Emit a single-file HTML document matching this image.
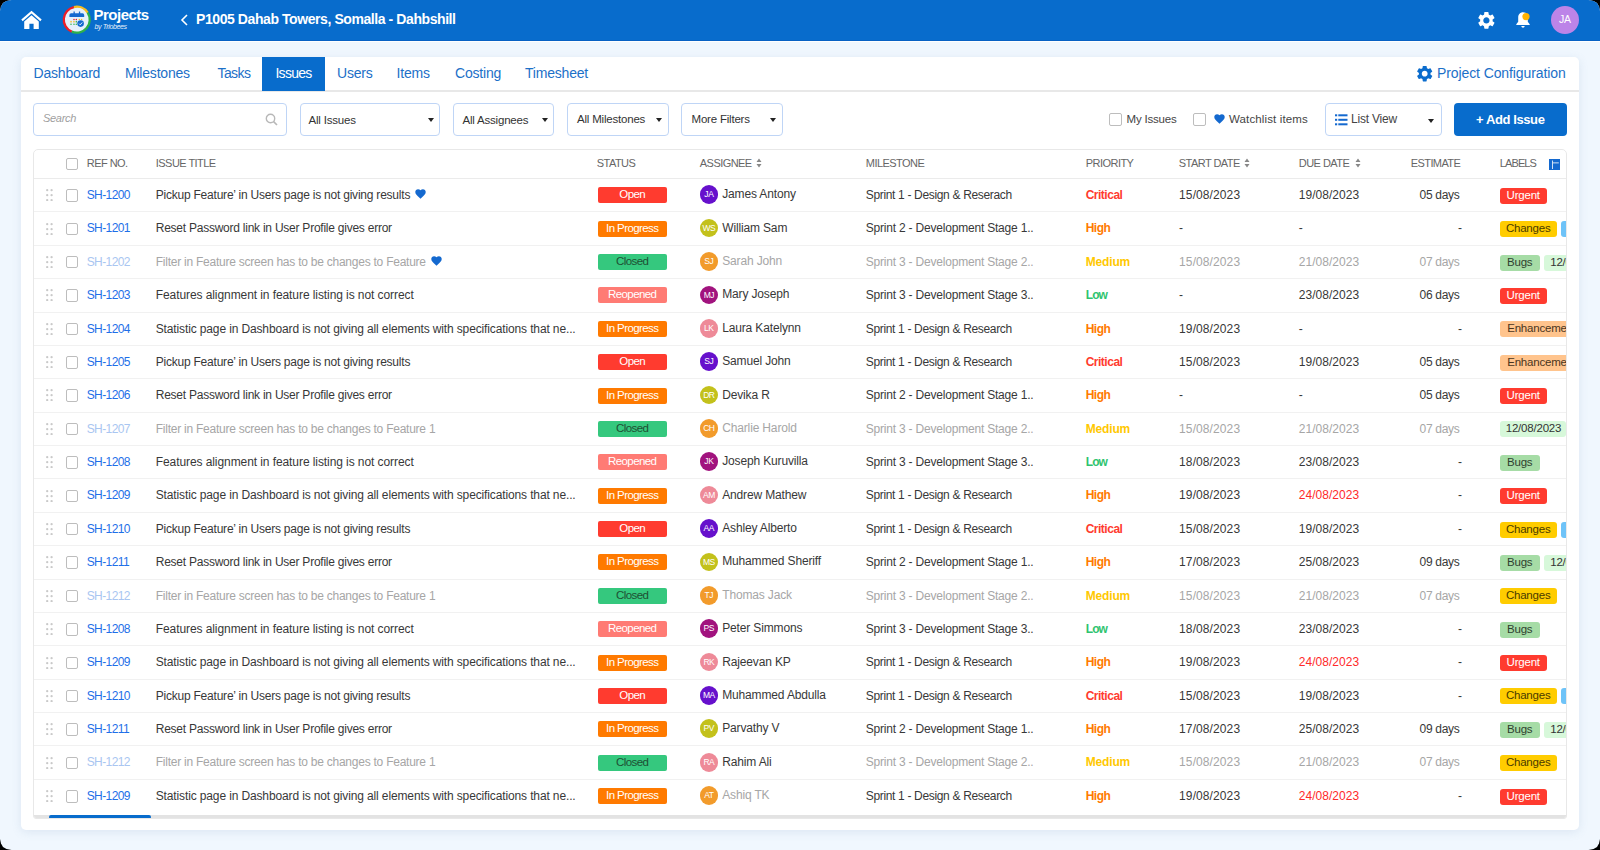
<!DOCTYPE html>
<html><head><meta charset="utf-8"><title>Issues</title>
<style>
*{margin:0;padding:0;box-sizing:border-box}
html,body{width:1600px;height:850px;overflow:hidden;background:#000}
body{font-family:"Liberation Sans",sans-serif;position:relative}
.frame{position:absolute;left:0;top:0;width:1600px;height:850px;overflow:hidden;background:#F0F7FE;clip-path:polygon(0px 11px,1px 6.5px,3px 3px,6.5px 1px,11.5px 0px,1588.5px 0px,1593.5px 1px,1597px 3px,1599px 6.5px,1600px 11px,1600px 839px,1599px 843.5px,1597px 847px,1593.5px 849px,1588.5px 850px,11.5px 850px,6.5px 849px,3px 847px,1px 843.5px,0px 839px)}
.topbar{position:absolute;left:0;top:0;width:1600px;height:40.6px;background:#086CCC;border-bottom:1.6px solid #0862C4}
.topline{position:absolute;left:0;top:40.6px;width:1600px;height:1.6px;background:#fff}
.abs{position:absolute}
.home{left:21px;top:10px}
.logo{left:62px;top:5px}
.brand{left:93.5px;top:5.6px;color:#fff;font-weight:bold;font-size:15px;letter-spacing:-0.5px;line-height:18px}
.brand-sub{left:94.5px;top:22.5px;color:#fff;font-style:italic;font-size:7px;line-height:8px;letter-spacing:-0.35px;opacity:.9}
.back{left:180px;top:14px}
.ptitle{left:196px;top:11px;color:#fff;font-weight:bold;font-size:14px;line-height:17px;letter-spacing:-0.42px}
.tgear{left:1475.8px;top:9.8px}
.bell{left:1515px;top:11px}
.uav{left:1551px;top:6px;width:28px;height:28px;border-radius:50%;background:#BC84E8;color:#fff;font-size:10.5px;text-align:center;line-height:27px;letter-spacing:-0.2px}

.card{position:absolute;left:20.8px;top:57.2px;width:1558.4px;height:772.5px;background:#fff;border-radius:5px;box-shadow:0 2px 10px rgba(110,140,180,.16)}
.tabline{position:absolute;left:21px;top:90px;width:1558px;height:1.5px;background:#E8E8E8}
.tab{position:absolute;top:57px;height:33.5px;line-height:33px;font-size:14px;color:#1C70C8;letter-spacing:-0.2px}
.tab.act{background:#086CCC;color:#fff;left:262.3px;width:62.5px;text-align:center}
.pconf{left:1437px;top:64px;font-size:14px;line-height:18px;color:#1C70C8;letter-spacing:-0.1px}
.pgear{left:1415.4px;top:63.5px}

.inp{position:absolute;top:103px;height:33px;border:1px solid #BFD5F6;border-radius:4px;background:#fff}
.ph{left:43px;top:111px;font-size:11px;font-style:italic;color:#A0A0A0;line-height:14px;letter-spacing:-0.3px}
.sicon{left:264.8px;top:113.2px}
.sel{position:absolute;font-size:11.5px;color:#333;line-height:14px;letter-spacing:-0.2px}
.caret{position:absolute;width:0;height:0;border-left:3.5px solid transparent;border-right:3.5px solid transparent;border-top:4px solid #222}
.cbx{position:absolute;width:12.5px;height:12.5px;border:1.3px solid #BDBDBD;border-radius:2px;background:#fff}
.lbl{position:absolute;font-size:11.5px;color:#444;line-height:14px;letter-spacing:-0.2px}
.addbtn{position:absolute;left:1454px;top:103px;width:112.5px;height:33px;border-radius:4px;background:#086CCC;color:#fff;font-weight:bold;font-size:13px;line-height:33px;text-align:center;letter-spacing:-0.4px}

.tbl{position:absolute;left:33px;top:149px;width:1534px;height:670px;border:1px solid #E8E8E8;border-radius:5px 5px 3px 3px;overflow:hidden;background:#fff}
.thead{position:absolute;left:-1.2px;top:0;width:calc(100% + 2px);height:29px;border-bottom:1.5px solid #EBEBEB}
.th{position:absolute;top:-0.7px;line-height:28px;font-size:11px;color:#666;letter-spacing:-0.55px}
.sort{display:inline-block;vertical-align:middle;margin-left:6px;margin-top:-2px}
.row{position:absolute;left:-1.3px;width:calc(100% + 2px);height:33.333px;border-bottom:1px solid #F1F1F1}
.drag{position:absolute;left:13.4px;top:10.2px;width:8px;height:12px}
.drag i{position:absolute;width:2.2px;height:2.2px;border-radius:50%;background:#C8C8C8}
.drag i:nth-child(1){left:0;top:0}.drag i:nth-child(2){left:4.4px;top:0}
.drag i:nth-child(3){left:0;top:5px}.drag i:nth-child(4){left:4.4px;top:5px}
.drag i:nth-child(5){left:0;top:10px}.drag i:nth-child(6){left:4.4px;top:10px}
.rcb{left:33px;top:10.2px}
.cb{position:absolute;width:12.5px;height:12.5px;border:1.3px solid #BDBDBD;border-radius:2px}
.c{position:absolute;top:0;line-height:33px;font-size:12px;color:#383838;white-space:nowrap}
.ref{left:54px;color:#1E6FE8;letter-spacing:-0.6px}
.ref.refg{color:#A9C6F1}
.title{left:123px;letter-spacing:-0.24px}
.title svg{vertical-align:middle;margin-top:-3px;margin-left:2px}
.tg{color:#A6A6A6}
.tr{color:#FF2A2A}
.badge{position:absolute;left:564.8px;top:8.3px;width:69.4px;height:16px;border-radius:2px;font-size:11.5px;line-height:15.4px;text-align:center;letter-spacing:-0.6px}
.av{position:absolute;left:666.8px;top:6.4px;width:18.7px;height:18.7px;border-radius:50%;color:#fff;font-size:8.5px;line-height:18.7px;text-align:center;letter-spacing:-0.45px}
.name{left:689.5px;top:-0.7px;letter-spacing:-0.15px}
.ms{left:833px;letter-spacing:-0.33px}
.prio{left:1053px;font-weight:bold;letter-spacing:-0.5px}
.sd{left:1146.4px;letter-spacing:0.1px}
.dd{left:1266px;letter-spacing:0.05px}
.est{right:107.2px;text-align:right;letter-spacing:-0.3px}
.labels{position:absolute;left:1467px;top:8.8px;white-space:nowrap;font-size:0}
.chip{display:inline-block;height:16px;line-height:15px;border-radius:3px;padding:0;text-align:center;font-size:11.5px;margin-right:4.5px;vertical-align:top;letter-spacing:-0.2px}
.ch-urg{background:#FF3B2F;color:#fff;width:47px}
.ch-chg{background:#FFCC00;color:#4A3B00;width:57px}
.ch-blue{background:#6EC3F8;width:20px}
.ch-bug{background:#A6DCA6;color:#2F3F2F;width:40px}
.ch-date{background:#D7F8DA;color:#333;width:66px;text-align:left;padding-left:6px}
.ch-enh{background:#FFC48D;color:#4A3520;width:80px;text-align:left;padding-left:7.5px}
.scroll{position:absolute;left:0;top:665px;width:100%;height:4px;background:#E3E3E3}
.thumb{position:absolute;left:14.9px;top:665px;width:102px;height:3.7px;border-radius:2px;background:#086CCC}

.row:last-of-type{border-bottom:none}
.lastrow{border-bottom:none}

</style></head><body>
<div class="frame">
<div class="topbar"></div>
<div class="topline"></div>
<svg class="abs home" width="21" height="20" viewBox="0 0 21 20"><path d="M10.5 0.8 0.3 9.6l1.4 1.6L10.5 3.6l8.8 7.6 1.4-1.6z" fill="#fff"/><path d="M10.5 5.2 3.2 11.4V19h5.2v-5.3h4.2V19h5.2v-7.6z" fill="#fff"/></svg>
<svg class="abs logo" width="30" height="30" viewBox="0 0 30 30">
<circle cx="14.75" cy="14.7" r="12.8" fill="#E6F0FB"/>
<path d="M11.83 2.03 A13.0 13.0 0 0 1 25.65 7.62" stroke="#F5BD1F" stroke-width="2.3" fill="none"/>
<path d="M25.65 7.62 A13.0 13.0 0 0 1 9.67 26.67" stroke="#2EB14B" stroke-width="2.3" fill="none"/>
<path d="M9.67 26.67 A13.0 13.0 0 0 1 11.83 2.03" stroke="#EE1D26" stroke-width="2.3" fill="none"/>
<path d="M7.4 12V10q0-1.8 1.8-1.8h11.2q1.8 0 1.8 1.8v2z" fill="#1469CF"/>
<rect x="11.5" y="6.5" width="1.3" height="2.5" fill="#1469CF"/><rect x="16.9" y="6.5" width="1.3" height="2.5" fill="#1469CF"/>
<g>
<circle cx="12" cy="14.4" r="0.75" fill="#E51C23"/><circle cx="14.3" cy="14.4" r="0.75" fill="#E51C23"/><circle cx="17.3" cy="14.4" r="0.7" fill="#F5BD1F"/><circle cx="19.6" cy="14.4" r="0.7" fill="#F5BD1F"/>
<rect x="8.4" y="15.9" width="1.3" height="1.6" fill="#F5BD1F"/><rect x="11.3" y="15.9" width="1.3" height="1.6" fill="#F5BD1F"/><rect x="13.7" y="15.9" width="1.2" height="1.6" fill="#2EB14B"/>
<circle cx="9" cy="19.3" r="0.75" fill="#2EB14B"/><circle cx="12" cy="19.3" r="0.75" fill="#2EB14B"/><circle cx="14.3" cy="19.3" r="0.75" fill="#2EB14B"/>
</g>
<circle cx="18.6" cy="18.6" r="3.3" fill="#1469CF"/><path d="M17.1 18.7l1.1 1.1 2-2.3" stroke="#fff" stroke-width="0.9" fill="none"/>
</svg>
<div class="abs brand">Projects</div>
<div class="abs brand-sub">by Triobees</div>
<svg class="abs back" width="9" height="12" viewBox="0 0 9 12"><path d="M7 1 2 6l5 5" stroke="#fff" stroke-width="1.6" fill="none"/></svg>
<div class="abs ptitle">P1005 Dahab Towers, Somalla - Dahbshill</div>
<svg class="abs tgear" width="20.8" height="20.8" viewBox="0 0 24 24"><path fill="#fff" d="M19.14 12.94c.04-.3.06-.61.06-.94 0-.32-.02-.64-.07-.94l2.03-1.58a.49.49 0 0 0 .12-.61l-1.92-3.32a.49.49 0 0 0-.59-.22l-2.39.96c-.5-.38-1.03-.7-1.62-.94l-.36-2.54a.48.48 0 0 0-.48-.41h-3.84c-.24 0-.43.17-.47.41l-.36 2.54c-.59.24-1.13.57-1.62.94l-2.39-.96a.48.48 0 0 0-.59.22L2.74 8.87c-.12.21-.08.47.12.61l2.03 1.58c-.05.3-.09.63-.09.94s.02.64.07.94l-2.03 1.58a.49.49 0 0 0-.12.61l1.92 3.32c.12.22.37.29.59.22l2.39-.96c.5.38 1.03.7 1.62.94l.36 2.54c.05.24.24.41.48.41h3.84c.24 0 .44-.17.47-.41l.36-2.54c.59-.24 1.13-.56 1.62-.94l2.39.96c.22.08.47 0 .59-.22l1.92-3.32c.12-.22.07-.47-.12-.61l-2.01-1.58zM12 15.6c-1.98 0-3.6-1.62-3.6-3.6s1.62-3.6 3.6-3.6 3.6 1.62 3.6 3.6-1.62 3.6-3.6 3.6z"/></svg>
<svg class="abs bell" width="16" height="18" viewBox="0 0 16 18"><path d="M8 1.2c-2.8 0-4.8 2.2-4.8 5v4.6L1.3 13.3v.8h13.4v-.8l-1.9-2.5V6.2c0-2.8-2-5-4.8-5z" fill="#fff"/><path d="M6.4 15.1h3.2c0 .9-.7 1.6-1.6 1.6s-1.6-.7-1.6-1.6z" fill="#fff"/><circle cx="11" cy="5.6" r="3.6" fill="#FFB300"/></svg>
<div class="abs uav">JA</div>

<div class="card"></div>
<div class="tabline"></div>
<div class="tab" style="left:33.5px">Dashboard</div>
<div class="tab" style="left:125px">Milestones</div>
<div class="tab" style="left:217.5px;letter-spacing:-0.6px">Tasks</div>
<div class="tab act" style="letter-spacing:-0.7px">Issues</div>
<div class="tab" style="left:337px">Users</div>
<div class="tab" style="left:396.5px">Items</div>
<div class="tab" style="left:455px">Costing</div>
<div class="tab" style="left:525px">Timesheet</div>
<svg class="abs pgear" width="19.4" height="19.4" viewBox="0 0 24 24"><path fill="#0B6CCD" d="M19.14 12.94c.04-.3.06-.61.06-.94 0-.32-.02-.64-.07-.94l2.03-1.58a.49.49 0 0 0 .12-.61l-1.92-3.32a.49.49 0 0 0-.59-.22l-2.39.96c-.5-.38-1.030-.7-1.62-.94l-.36-2.54a.48.48 0 0 0-.48-.41h-3.84c-.24 0-.43.17-.47.41l-.36 2.54c-.59.24-1.13.57-1.62.94l-2.39-.96a.48.48 0 0 0-.59.22L2.74 8.87c-.12.21-.08.47.12.61l2.03 1.58c-.05.3-.09.63-.09.94s.02.64.07.94l-2.03 1.58a.49.49 0 0 0-.12.61l1.92 3.32c.12.22.37.29.59.22l2.39-.96c.5.38 1.03.7 1.62.94l.36 2.54c.05.24.24.41.48.41h3.84c.24 0 .44-.17.47-.41l.36-2.54c.59-.24 1.13-.56 1.62-.94l2.39.96c.22.08.47 0 .59-.22l1.92-3.32c.12-.22.07-.47-.12-.61l-2.01-1.58zM12 15.6c-1.98 0-3.6-1.620-3.6-3.6s1.62-3.6 3.6-3.6 3.6 1.62 3.6 3.6-1.62 3.6-3.6 3.6z"/></svg>
<div class="abs pconf">Project Configuration</div>

<div class="inp" style="left:33px;width:254px"></div>
<div class="abs ph">Search</div>
<svg class="abs sicon" width="14" height="13" viewBox="0 0 14 13"><circle cx="5.5" cy="5.5" r="4.2" stroke="#B8B8B8" stroke-width="1.4" fill="none"/><path d="M8.6 8.6l3.4 3.4" stroke="#B8B8B8" stroke-width="1.6"/></svg>
<div class="inp" style="left:300px;width:140px"></div>
<div class="sel" style="left:308.5px;top:113px">All Issues</div>
<div class="caret" style="left:427.5px;top:117.8px"></div>
<div class="inp" style="left:453px;width:101px"></div>
<div class="sel" style="left:462.5px;top:113px">All Assignees</div>
<div class="caret" style="left:541.5px;top:117.5px"></div>
<div class="inp" style="left:567px;width:102px"></div>
<div class="sel" style="left:577px;top:112px">All Milestones</div>
<div class="caret" style="left:655.8px;top:117.5px"></div>
<div class="inp" style="left:681px;width:102px"></div>
<div class="sel" style="left:691.5px;top:112px">More Filters</div>
<div class="caret" style="left:770px;top:117.5px"></div>

<div class="cbx" style="left:1109px;top:113px"></div>
<div class="lbl" style="left:1126.5px;top:112px">My Issues</div>
<div class="cbx" style="left:1193px;top:113px"></div>
<svg class="abs" style="left:1214px;top:114px" width="11" height="10" viewBox="0 0 24 22"><path d="M12 21.5 10.3 20C4.2 14.5 0.5 11.1 0.5 6.7 0.5 3.2 3.2 0.5 6.7 0.5c2 0 3.9 0.9 5.3 2.4C13.4 1.4 15.3 0.5 17.3 0.5c3.5 0 6.2 2.7 6.2 6.2 0 4.4-3.7 7.8-9.8 13.3z" fill="#1469CF"/></svg>
<div class="lbl" style="left:1229px;top:112px;letter-spacing:0.13px">Watchlist items</div>
<div class="inp" style="left:1325px;width:117px"></div>
<svg class="abs" style="left:1334.8px;top:114.4px" width="13" height="12" viewBox="0 0 13 12"><rect x="0" y="0.3" width="2.2" height="2" fill="#1469CF"/><rect x="3.3" y="0.3" width="9.2" height="2" fill="#1469CF"/><rect x="0" y="4.8" width="2.2" height="2" fill="#1469CF"/><rect x="3.3" y="4.8" width="9.2" height="2" fill="#1469CF"/><rect x="0" y="9.3" width="2.2" height="2" fill="#1469CF"/><rect x="3.3" y="9.3" width="9.2" height="2" fill="#1469CF"/></svg>
<div class="lbl" style="left:1351px;top:112px;font-size:12px">List View</div>
<div class="caret" style="left:1428px;top:118.5px"></div>
<div class="addbtn">+ Add Issue</div>

<div class="tbl">
<div class="thead">
<div class="cb" style="left:33px;top:7.6px"></div>
<div class="th" style="left:54px">REF NO.</div>
<div class="th" style="left:123px">ISSUE TITLE</div>
<div class="th" style="left:564px">STATUS</div>
<div class="th" style="left:667px">ASSIGNEE<svg style="margin-left:4px" class="sort" width="6" height="10" viewBox="0 0 6 10"><path d="M3 0.5 5.5 4h-5zM3 9.5 5.5 6h-5z" fill="#888"/></svg></div>
<div class="th" style="left:833px">MILESTONE</div>
<div class="th" style="left:1053px">PRIORITY</div>
<div class="th" style="left:1146px">START DATE<svg style="margin-left:4.5px" class="sort" width="6" height="10" viewBox="0 0 6 10"><path d="M3 0.5 5.5 4h-5zM3 9.5 5.5 6h-5z" fill="#888"/></svg></div>
<div class="th" style="left:1266px">DUE DATE<svg class="sort" width="6" height="10" viewBox="0 0 6 10"><path d="M3 0.5 5.5 4h-5zM3 9.5 5.5 6h-5z" fill="#888"/></svg></div>
<div class="th" style="left:1378px;letter-spacing:-0.6px">ESTIMATE</div>
<div class="th" style="left:1467px;letter-spacing:-0.9px">LABELS</div>
<svg class="abs" style="left:1516px;top:9px" width="11" height="11" viewBox="0 0 11 11"><rect width="11" height="11" fill="#1469CF"/><rect x="3" y="1.5" width="0.8" height="8.5" fill="#fff"/><rect x="3.8" y="3.5" width="6" height="0.8" fill="#fff"/></svg>
</div>
<div class="row" style="top:29.00px;height:33.38px">
<svg class="drag" width="8" height="12" viewBox="0 0 8 12"><g fill="#C9C9C9"><circle cx="1.2" cy="1.2" r="1.15"/><circle cx="5.6" cy="1.2" r="1.15"/><circle cx="1.2" cy="6.2" r="1.15"/><circle cx="5.6" cy="6.2" r="1.15"/><circle cx="1.2" cy="11.1" r="1.15"/><circle cx="5.6" cy="11.1" r="1.15"/></g></svg>
<div class="cb rcb"></div>
<div class="c ref">SH-1200</div>
<div class="c title" style="letter-spacing:-0.22px">Pickup Feature’ in Users page is not giving results <svg width="11" height="10" viewBox="0 0 24 22"><path d="M12 21.5 10.3 20C4.2 14.5 0.5 11.1 0.5 6.7 0.5 3.2 3.2 0.5 6.7 0.5c2 0 3.9 0.9 5.3 2.4C13.4 1.4 15.3 0.5 17.3 0.5c3.5 0 6.2 2.7 6.2 6.2 0 4.4-3.7 7.8-9.8 13.3z" fill="#1469CF"/></svg></div>
<div class="badge" style="background:#FF3B2F;color:#fff">Open</div>
<div class="av" style="background:#6610CC">JA</div>
<div class="c name">James Antony</div>
<div class="c ms">Sprint 1 - Design &amp; Reserach</div>
<div class="c prio" style="color:#FF3B2F;letter-spacing:-0.5px">Critical</div>
<div class="c sd">15/08/2023</div>
<div class="c dd">19/08/2023</div>
<div class="c est">05 days</div>
<div class="labels"><span class="chip ch-urg">Urgent</span></div>
</div>
<div class="row" style="top:62.38px;height:33.38px">
<svg class="drag" width="8" height="12" viewBox="0 0 8 12"><g fill="#C9C9C9"><circle cx="1.2" cy="1.2" r="1.15"/><circle cx="5.6" cy="1.2" r="1.15"/><circle cx="1.2" cy="6.2" r="1.15"/><circle cx="5.6" cy="6.2" r="1.15"/><circle cx="1.2" cy="11.1" r="1.15"/><circle cx="5.6" cy="11.1" r="1.15"/></g></svg>
<div class="cb rcb"></div>
<div class="c ref">SH-1201</div>
<div class="c title" style="letter-spacing:-0.24px">Reset Password link in User Profile gives error</div>
<div class="badge" style="background:#FF7A00;color:#fff">In Progress</div>
<div class="av" style="background:#C3C11B">WS</div>
<div class="c name">William Sam</div>
<div class="c ms" style="letter-spacing:-0.2px">Sprint 2 - Development Stage 1..</div>
<div class="c prio" style="color:#FF7A00;letter-spacing:-0.5px">High</div>
<div class="c sd">-</div>
<div class="c dd">-</div>
<div class="c est" style="right:105px">-</div>
<div class="labels"><span class="chip ch-chg">Changes</span><span class="chip ch-blue">&nbsp;</span></div>
</div>
<div class="row" style="top:95.76px;height:33.38px">
<svg class="drag" width="8" height="12" viewBox="0 0 8 12"><g fill="#C9C9C9"><circle cx="1.2" cy="1.2" r="1.15"/><circle cx="5.6" cy="1.2" r="1.15"/><circle cx="1.2" cy="6.2" r="1.15"/><circle cx="5.6" cy="6.2" r="1.15"/><circle cx="1.2" cy="11.1" r="1.15"/><circle cx="5.6" cy="11.1" r="1.15"/></g></svg>
<div class="cb rcb"></div>
<div class="c ref refg">SH-1202</div>
<div class="c title tg" style="letter-spacing:-0.24px">Filter in Feature screen has to be changes to Feature <svg width="11" height="10" viewBox="0 0 24 22"><path d="M12 21.5 10.3 20C4.2 14.5 0.5 11.1 0.5 6.7 0.5 3.2 3.2 0.5 6.7 0.5c2 0 3.9 0.9 5.3 2.4C13.4 1.4 15.3 0.5 17.3 0.5c3.5 0 6.2 2.7 6.2 6.2 0 4.4-3.7 7.8-9.8 13.3z" fill="#1469CF"/></svg></div>
<div class="badge" style="background:#35C87E;color:#1E4F33">Closed</div>
<div class="av" style="background:#F29B2B">SJ</div>
<div class="c name tg">Sarah John</div>
<div class="c ms tg" style="letter-spacing:-0.2px">Sprint 3 - Development Stage 2..</div>
<div class="c prio" style="color:#FFC800;letter-spacing:-0.15px">Medium</div>
<div class="c sd tg">15/08/2023</div>
<div class="c dd tg">21/08/2023</div>
<div class="c est tg">07 days</div>
<div class="labels"><span class="chip ch-bug">Bugs</span><span class="chip ch-date">12/08/2023</span></div>
</div>
<div class="row" style="top:129.14px;height:33.38px">
<svg class="drag" width="8" height="12" viewBox="0 0 8 12"><g fill="#C9C9C9"><circle cx="1.2" cy="1.2" r="1.15"/><circle cx="5.6" cy="1.2" r="1.15"/><circle cx="1.2" cy="6.2" r="1.15"/><circle cx="5.6" cy="6.2" r="1.15"/><circle cx="1.2" cy="11.1" r="1.15"/><circle cx="5.6" cy="11.1" r="1.15"/></g></svg>
<div class="cb rcb"></div>
<div class="c ref">SH-1203</div>
<div class="c title" style="letter-spacing:-0.08px">Features alignment in feature listing is not correct</div>
<div class="badge" style="background:#FF7B74;color:#fff">Reopened</div>
<div class="av" style="background:#A1137E">MJ</div>
<div class="c name">Mary Joseph</div>
<div class="c ms" style="letter-spacing:-0.2px">Sprint 3 - Development Stage 3..</div>
<div class="c prio" style="color:#2FC46F;letter-spacing:-0.9px">Low</div>
<div class="c sd">-</div>
<div class="c dd">23/08/2023</div>
<div class="c est">06 days</div>
<div class="labels"><span class="chip ch-urg">Urgent</span></div>
</div>
<div class="row" style="top:162.52px;height:33.38px">
<svg class="drag" width="8" height="12" viewBox="0 0 8 12"><g fill="#C9C9C9"><circle cx="1.2" cy="1.2" r="1.15"/><circle cx="5.6" cy="1.2" r="1.15"/><circle cx="1.2" cy="6.2" r="1.15"/><circle cx="5.6" cy="6.2" r="1.15"/><circle cx="1.2" cy="11.1" r="1.15"/><circle cx="5.6" cy="11.1" r="1.15"/></g></svg>
<div class="cb rcb"></div>
<div class="c ref">SH-1204</div>
<div class="c title" style="letter-spacing:-0.13px">Statistic page in Dashboard is not giving all elements with specifications that ne...</div>
<div class="badge" style="background:#FF7A00;color:#fff">In Progress</div>
<div class="av" style="background:#EE8A98">LK</div>
<div class="c name">Laura Katelynn</div>
<div class="c ms">Sprint 1 - Design &amp; Research</div>
<div class="c prio" style="color:#FF7A00;letter-spacing:-0.5px">High</div>
<div class="c sd">19/08/2023</div>
<div class="c dd">-</div>
<div class="c est" style="right:105px">-</div>
<div class="labels"><span class="chip ch-enh">Enhancement</span></div>
</div>
<div class="row" style="top:195.90px;height:33.38px">
<svg class="drag" width="8" height="12" viewBox="0 0 8 12"><g fill="#C9C9C9"><circle cx="1.2" cy="1.2" r="1.15"/><circle cx="5.6" cy="1.2" r="1.15"/><circle cx="1.2" cy="6.2" r="1.15"/><circle cx="5.6" cy="6.2" r="1.15"/><circle cx="1.2" cy="11.1" r="1.15"/><circle cx="5.6" cy="11.1" r="1.15"/></g></svg>
<div class="cb rcb"></div>
<div class="c ref">SH-1205</div>
<div class="c title" style="letter-spacing:-0.22px">Pickup Feature’ in Users page is not giving results</div>
<div class="badge" style="background:#FF3B2F;color:#fff">Open</div>
<div class="av" style="background:#6610CC">SJ</div>
<div class="c name">Samuel John</div>
<div class="c ms">Sprint 1 - Design &amp; Research</div>
<div class="c prio" style="color:#FF3B2F;letter-spacing:-0.5px">Critical</div>
<div class="c sd">15/08/2023</div>
<div class="c dd">19/08/2023</div>
<div class="c est">05 days</div>
<div class="labels"><span class="chip ch-enh">Enhancement</span></div>
</div>
<div class="row" style="top:229.28px;height:33.38px">
<svg class="drag" width="8" height="12" viewBox="0 0 8 12"><g fill="#C9C9C9"><circle cx="1.2" cy="1.2" r="1.15"/><circle cx="5.6" cy="1.2" r="1.15"/><circle cx="1.2" cy="6.2" r="1.15"/><circle cx="5.6" cy="6.2" r="1.15"/><circle cx="1.2" cy="11.1" r="1.15"/><circle cx="5.6" cy="11.1" r="1.15"/></g></svg>
<div class="cb rcb"></div>
<div class="c ref">SH-1206</div>
<div class="c title" style="letter-spacing:-0.24px">Reset Password link in User Profile gives error</div>
<div class="badge" style="background:#FF7A00;color:#fff">In Progress</div>
<div class="av" style="background:#C3C11B">DR</div>
<div class="c name">Devika R</div>
<div class="c ms" style="letter-spacing:-0.2px">Sprint 2 - Development Stage 1..</div>
<div class="c prio" style="color:#FF7A00;letter-spacing:-0.5px">High</div>
<div class="c sd">-</div>
<div class="c dd">-</div>
<div class="c est">05 days</div>
<div class="labels"><span class="chip ch-urg">Urgent</span></div>
</div>
<div class="row" style="top:262.66px;height:33.38px">
<svg class="drag" width="8" height="12" viewBox="0 0 8 12"><g fill="#C9C9C9"><circle cx="1.2" cy="1.2" r="1.15"/><circle cx="5.6" cy="1.2" r="1.15"/><circle cx="1.2" cy="6.2" r="1.15"/><circle cx="5.6" cy="6.2" r="1.15"/><circle cx="1.2" cy="11.1" r="1.15"/><circle cx="5.6" cy="11.1" r="1.15"/></g></svg>
<div class="cb rcb"></div>
<div class="c ref refg">SH-1207</div>
<div class="c title tg" style="letter-spacing:-0.24px">Filter in Feature screen has to be changes to Feature 1</div>
<div class="badge" style="background:#35C87E;color:#1E4F33">Closed</div>
<div class="av" style="background:#F29B2B">CH</div>
<div class="c name tg">Charlie Harold</div>
<div class="c ms tg" style="letter-spacing:-0.2px">Sprint 3 - Development Stage 2..</div>
<div class="c prio" style="color:#FFC800;letter-spacing:-0.15px">Medium</div>
<div class="c sd tg">15/08/2023</div>
<div class="c dd tg">21/08/2023</div>
<div class="c est tg">07 days</div>
<div class="labels"><span class="chip ch-date">12/08/2023</span></div>
</div>
<div class="row" style="top:296.04px;height:33.38px">
<svg class="drag" width="8" height="12" viewBox="0 0 8 12"><g fill="#C9C9C9"><circle cx="1.2" cy="1.2" r="1.15"/><circle cx="5.6" cy="1.2" r="1.15"/><circle cx="1.2" cy="6.2" r="1.15"/><circle cx="5.6" cy="6.2" r="1.15"/><circle cx="1.2" cy="11.1" r="1.15"/><circle cx="5.6" cy="11.1" r="1.15"/></g></svg>
<div class="cb rcb"></div>
<div class="c ref">SH-1208</div>
<div class="c title" style="letter-spacing:-0.08px">Features alignment in feature listing is not correct</div>
<div class="badge" style="background:#FF7B74;color:#fff">Reopened</div>
<div class="av" style="background:#A1137E">JK</div>
<div class="c name">Joseph Kuruvilla</div>
<div class="c ms" style="letter-spacing:-0.2px">Sprint 3 - Development Stage 3..</div>
<div class="c prio" style="color:#2FC46F;letter-spacing:-0.9px">Low</div>
<div class="c sd">18/08/2023</div>
<div class="c dd">23/08/2023</div>
<div class="c est" style="right:105px">-</div>
<div class="labels"><span class="chip ch-bug">Bugs</span></div>
</div>
<div class="row" style="top:329.42px;height:33.38px">
<svg class="drag" width="8" height="12" viewBox="0 0 8 12"><g fill="#C9C9C9"><circle cx="1.2" cy="1.2" r="1.15"/><circle cx="5.6" cy="1.2" r="1.15"/><circle cx="1.2" cy="6.2" r="1.15"/><circle cx="5.6" cy="6.2" r="1.15"/><circle cx="1.2" cy="11.1" r="1.15"/><circle cx="5.6" cy="11.1" r="1.15"/></g></svg>
<div class="cb rcb"></div>
<div class="c ref">SH-1209</div>
<div class="c title" style="letter-spacing:-0.13px">Statistic page in Dashboard is not giving all elements with specifications that ne...</div>
<div class="badge" style="background:#FF7A00;color:#fff">In Progress</div>
<div class="av" style="background:#EE8A98">AM</div>
<div class="c name">Andrew Mathew</div>
<div class="c ms">Sprint 1 - Design &amp; Research</div>
<div class="c prio" style="color:#FF7A00;letter-spacing:-0.5px">High</div>
<div class="c sd">19/08/2023</div>
<div class="c dd tr">24/08/2023</div>
<div class="c est" style="right:105px">-</div>
<div class="labels"><span class="chip ch-urg">Urgent</span></div>
</div>
<div class="row" style="top:362.80px;height:33.38px">
<svg class="drag" width="8" height="12" viewBox="0 0 8 12"><g fill="#C9C9C9"><circle cx="1.2" cy="1.2" r="1.15"/><circle cx="5.6" cy="1.2" r="1.15"/><circle cx="1.2" cy="6.2" r="1.15"/><circle cx="5.6" cy="6.2" r="1.15"/><circle cx="1.2" cy="11.1" r="1.15"/><circle cx="5.6" cy="11.1" r="1.15"/></g></svg>
<div class="cb rcb"></div>
<div class="c ref">SH-1210</div>
<div class="c title" style="letter-spacing:-0.22px">Pickup Feature’ in Users page is not giving results</div>
<div class="badge" style="background:#FF3B2F;color:#fff">Open</div>
<div class="av" style="background:#6610CC">AA</div>
<div class="c name">Ashley Alberto</div>
<div class="c ms">Sprint 1 - Design &amp; Research</div>
<div class="c prio" style="color:#FF3B2F;letter-spacing:-0.5px">Critical</div>
<div class="c sd">15/08/2023</div>
<div class="c dd">19/08/2023</div>
<div class="c est" style="right:105px">-</div>
<div class="labels"><span class="chip ch-chg">Changes</span><span class="chip ch-blue">&nbsp;</span></div>
</div>
<div class="row" style="top:396.18px;height:33.38px">
<svg class="drag" width="8" height="12" viewBox="0 0 8 12"><g fill="#C9C9C9"><circle cx="1.2" cy="1.2" r="1.15"/><circle cx="5.6" cy="1.2" r="1.15"/><circle cx="1.2" cy="6.2" r="1.15"/><circle cx="5.6" cy="6.2" r="1.15"/><circle cx="1.2" cy="11.1" r="1.15"/><circle cx="5.6" cy="11.1" r="1.15"/></g></svg>
<div class="cb rcb"></div>
<div class="c ref">SH-1211</div>
<div class="c title" style="letter-spacing:-0.24px">Reset Password link in User Profile gives error</div>
<div class="badge" style="background:#FF7A00;color:#fff">In Progress</div>
<div class="av" style="background:#C3C11B">MS</div>
<div class="c name">Muhammed Sheriff</div>
<div class="c ms" style="letter-spacing:-0.2px">Sprint 2 - Development Stage 1..</div>
<div class="c prio" style="color:#FF7A00;letter-spacing:-0.5px">High</div>
<div class="c sd">17/08/2023</div>
<div class="c dd">25/08/2023</div>
<div class="c est">09 days</div>
<div class="labels"><span class="chip ch-bug">Bugs</span><span class="chip ch-date">12/08/2023</span></div>
</div>
<div class="row" style="top:429.56px;height:33.38px">
<svg class="drag" width="8" height="12" viewBox="0 0 8 12"><g fill="#C9C9C9"><circle cx="1.2" cy="1.2" r="1.15"/><circle cx="5.6" cy="1.2" r="1.15"/><circle cx="1.2" cy="6.2" r="1.15"/><circle cx="5.6" cy="6.2" r="1.15"/><circle cx="1.2" cy="11.1" r="1.15"/><circle cx="5.6" cy="11.1" r="1.15"/></g></svg>
<div class="cb rcb"></div>
<div class="c ref refg">SH-1212</div>
<div class="c title tg" style="letter-spacing:-0.24px">Filter in Feature screen has to be changes to Feature 1</div>
<div class="badge" style="background:#35C87E;color:#1E4F33">Closed</div>
<div class="av" style="background:#F29B2B">TJ</div>
<div class="c name tg">Thomas Jack</div>
<div class="c ms tg" style="letter-spacing:-0.2px">Sprint 3 - Development Stage 2..</div>
<div class="c prio" style="color:#FFC800;letter-spacing:-0.15px">Medium</div>
<div class="c sd tg">15/08/2023</div>
<div class="c dd tg">21/08/2023</div>
<div class="c est tg">07 days</div>
<div class="labels"><span class="chip ch-chg">Changes</span></div>
</div>
<div class="row" style="top:462.94px;height:33.38px">
<svg class="drag" width="8" height="12" viewBox="0 0 8 12"><g fill="#C9C9C9"><circle cx="1.2" cy="1.2" r="1.15"/><circle cx="5.6" cy="1.2" r="1.15"/><circle cx="1.2" cy="6.2" r="1.15"/><circle cx="5.6" cy="6.2" r="1.15"/><circle cx="1.2" cy="11.1" r="1.15"/><circle cx="5.6" cy="11.1" r="1.15"/></g></svg>
<div class="cb rcb"></div>
<div class="c ref">SH-1208</div>
<div class="c title" style="letter-spacing:-0.08px">Features alignment in feature listing is not correct</div>
<div class="badge" style="background:#FF7B74;color:#fff">Reopened</div>
<div class="av" style="background:#A1137E">PS</div>
<div class="c name">Peter Simmons</div>
<div class="c ms" style="letter-spacing:-0.2px">Sprint 3 - Development Stage 3..</div>
<div class="c prio" style="color:#2FC46F;letter-spacing:-0.9px">Low</div>
<div class="c sd">18/08/2023</div>
<div class="c dd">23/08/2023</div>
<div class="c est" style="right:105px">-</div>
<div class="labels"><span class="chip ch-bug">Bugs</span></div>
</div>
<div class="row" style="top:496.32px;height:33.38px">
<svg class="drag" width="8" height="12" viewBox="0 0 8 12"><g fill="#C9C9C9"><circle cx="1.2" cy="1.2" r="1.15"/><circle cx="5.6" cy="1.2" r="1.15"/><circle cx="1.2" cy="6.2" r="1.15"/><circle cx="5.6" cy="6.2" r="1.15"/><circle cx="1.2" cy="11.1" r="1.15"/><circle cx="5.6" cy="11.1" r="1.15"/></g></svg>
<div class="cb rcb"></div>
<div class="c ref">SH-1209</div>
<div class="c title" style="letter-spacing:-0.13px">Statistic page in Dashboard is not giving all elements with specifications that ne...</div>
<div class="badge" style="background:#FF7A00;color:#fff">In Progress</div>
<div class="av" style="background:#EE8A98">RK</div>
<div class="c name">Rajeevan KP</div>
<div class="c ms">Sprint 1 - Design &amp; Research</div>
<div class="c prio" style="color:#FF7A00;letter-spacing:-0.5px">High</div>
<div class="c sd">19/08/2023</div>
<div class="c dd tr">24/08/2023</div>
<div class="c est" style="right:105px">-</div>
<div class="labels"><span class="chip ch-urg">Urgent</span></div>
</div>
<div class="row" style="top:529.70px;height:33.38px">
<svg class="drag" width="8" height="12" viewBox="0 0 8 12"><g fill="#C9C9C9"><circle cx="1.2" cy="1.2" r="1.15"/><circle cx="5.6" cy="1.2" r="1.15"/><circle cx="1.2" cy="6.2" r="1.15"/><circle cx="5.6" cy="6.2" r="1.15"/><circle cx="1.2" cy="11.1" r="1.15"/><circle cx="5.6" cy="11.1" r="1.15"/></g></svg>
<div class="cb rcb"></div>
<div class="c ref">SH-1210</div>
<div class="c title" style="letter-spacing:-0.22px">Pickup Feature’ in Users page is not giving results</div>
<div class="badge" style="background:#FF3B2F;color:#fff">Open</div>
<div class="av" style="background:#6610CC">MA</div>
<div class="c name">Muhammed Abdulla</div>
<div class="c ms">Sprint 1 - Design &amp; Research</div>
<div class="c prio" style="color:#FF3B2F;letter-spacing:-0.5px">Critical</div>
<div class="c sd">15/08/2023</div>
<div class="c dd">19/08/2023</div>
<div class="c est" style="right:105px">-</div>
<div class="labels"><span class="chip ch-chg">Changes</span><span class="chip ch-blue">&nbsp;</span></div>
</div>
<div class="row" style="top:563.08px;height:33.38px">
<svg class="drag" width="8" height="12" viewBox="0 0 8 12"><g fill="#C9C9C9"><circle cx="1.2" cy="1.2" r="1.15"/><circle cx="5.6" cy="1.2" r="1.15"/><circle cx="1.2" cy="6.2" r="1.15"/><circle cx="5.6" cy="6.2" r="1.15"/><circle cx="1.2" cy="11.1" r="1.15"/><circle cx="5.6" cy="11.1" r="1.15"/></g></svg>
<div class="cb rcb"></div>
<div class="c ref">SH-1211</div>
<div class="c title" style="letter-spacing:-0.24px">Reset Password link in User Profile gives error</div>
<div class="badge" style="background:#FF7A00;color:#fff">In Progress</div>
<div class="av" style="background:#C3C11B">PV</div>
<div class="c name">Parvathy V</div>
<div class="c ms" style="letter-spacing:-0.2px">Sprint 2 - Development Stage 1..</div>
<div class="c prio" style="color:#FF7A00;letter-spacing:-0.5px">High</div>
<div class="c sd">17/08/2023</div>
<div class="c dd">25/08/2023</div>
<div class="c est">09 days</div>
<div class="labels"><span class="chip ch-bug">Bugs</span><span class="chip ch-date">12/08/2023</span></div>
</div>
<div class="row" style="top:596.46px;height:33.38px">
<svg class="drag" width="8" height="12" viewBox="0 0 8 12"><g fill="#C9C9C9"><circle cx="1.2" cy="1.2" r="1.15"/><circle cx="5.6" cy="1.2" r="1.15"/><circle cx="1.2" cy="6.2" r="1.15"/><circle cx="5.6" cy="6.2" r="1.15"/><circle cx="1.2" cy="11.1" r="1.15"/><circle cx="5.6" cy="11.1" r="1.15"/></g></svg>
<div class="cb rcb"></div>
<div class="c ref refg">SH-1212</div>
<div class="c title tg" style="letter-spacing:-0.24px">Filter in Feature screen has to be changes to Feature 1</div>
<div class="badge" style="background:#35C87E;color:#1E4F33">Closed</div>
<div class="av" style="background:#EE8A98">RA</div>
<div class="c name">Rahim Ali</div>
<div class="c ms tg" style="letter-spacing:-0.2px">Sprint 3 - Development Stage 2..</div>
<div class="c prio" style="color:#FFC800;letter-spacing:-0.15px">Medium</div>
<div class="c sd tg">15/08/2023</div>
<div class="c dd tg">21/08/2023</div>
<div class="c est tg">07 days</div>
<div class="labels"><span class="chip ch-chg">Changes</span></div>
</div>
<div class="row lastrow" style="top:629.84px;height:33.38px">
<svg class="drag" width="8" height="12" viewBox="0 0 8 12"><g fill="#C9C9C9"><circle cx="1.2" cy="1.2" r="1.15"/><circle cx="5.6" cy="1.2" r="1.15"/><circle cx="1.2" cy="6.2" r="1.15"/><circle cx="5.6" cy="6.2" r="1.15"/><circle cx="1.2" cy="11.1" r="1.15"/><circle cx="5.6" cy="11.1" r="1.15"/></g></svg>
<div class="cb rcb"></div>
<div class="c ref">SH-1209</div>
<div class="c title" style="letter-spacing:-0.13px">Statistic page in Dashboard is not giving all elements with specifications that ne...</div>
<div class="badge" style="background:#FF7A00;color:#fff">In Progress</div>
<div class="av" style="background:#F29B2B">AT</div>
<div class="c name tg">Ashiq TK</div>
<div class="c ms">Sprint 1 - Design &amp; Research</div>
<div class="c prio" style="color:#FF7A00;letter-spacing:-0.5px">High</div>
<div class="c sd">19/08/2023</div>
<div class="c dd tr">24/08/2023</div>
<div class="c est" style="right:105px">-</div>
<div class="labels"><span class="chip ch-urg">Urgent</span></div>
</div>
<div class="scroll"></div>
<div class="thumb"></div>
</div>
</div>

</body></html>
